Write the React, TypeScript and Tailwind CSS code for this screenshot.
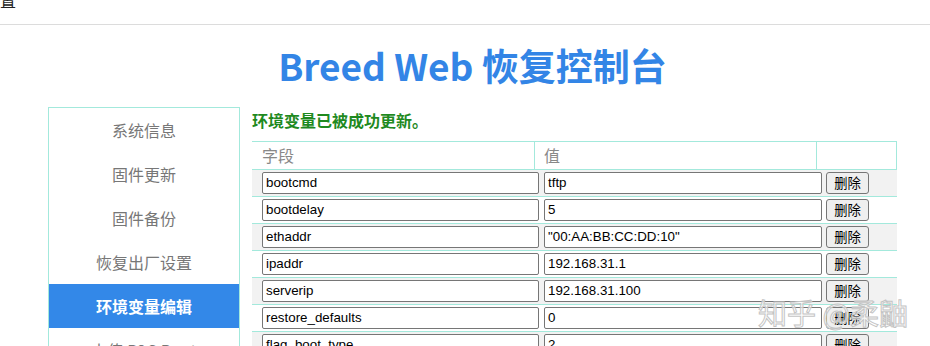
import React from "react";

const rows: [string, string][] = [
  ["bootcmd", "tftp"],
  ["bootdelay", "5"],
  ["ethaddr", '"00:AA:BB:CC:DD:10"'],
  ["ipaddr", "192.168.31.1"],
  ["serverip", "192.168.31.100"],
  ["restore_defaults", "0"],
  ["flag_boot_type", "2"],
];

const nav = ["系统信息", "固件更新", "固件备份", "恢复出厂设置", "环境变量编辑", "上传 P2G Boot"];

export default function App() {
  return (
    <div className="relative w-[930px] h-[346px] overflow-hidden bg-white" style={{ fontFamily: '"Noto Sans CJK SC", sans-serif' }}>
      <div className="h-[25px] border-b border-[#dcdcdc] overflow-hidden">
        <div className="-mt-[10px] text-[16px] leading-[20px] text-[#222] pl-0">置</div>
      </div>
      <div className="pl-[48px] w-[897px]">
        <h1 className="mt-[15px] h-[67px] text-center text-[37px] font-bold leading-[50px] text-[#3385e6] whitespace-nowrap">Breed Web 恢复控制台</h1>
        <div className="flex">
          <div className="w-[192px] shrink-0 border border-[#a3e9dc] text-[16px]">
            {nav.map((n, i) => (
              <div
                key={n}
                className={
                  "h-[44px] flex items-center justify-center whitespace-nowrap " +
                  (i === 4 ? "bg-[#3388e8] text-white font-bold" : "text-[#777]")
                }
              >
                {n}
              </div>
            ))}
          </div>
          <div className="ml-[12px] flex-1">
            <div className="mt-[1px] h-[33px] text-[16px] font-bold text-[#1f8a1f] leading-[24px]">环境变量已被成功更新。</div>
            <div className="flex h-[29px] border-t border-b border-[#a3e9dc] text-[16px] text-[#888]">
              <div className="w-[282px] pl-[10px] leading-[27px]">字段</div>
              <div className="w-[282px] border-l border-[#a3e9dc] pl-[9px] leading-[27px]">值</div>
              <div className="flex-1 border-l border-r border-[#a3e9dc]"></div>
            </div>
            {rows.map(([k, v], i) => (
              <div
                key={k}
                className={
                  "flex items-center h-[27px] border-b border-[#a3e9dc] pl-[10px] gap-[4px] " +
                  (i % 2 === 0 ? "bg-[#f2f2f2]" : "bg-white")
                }
                style={{ fontFamily: '"Liberation Sans", Arial, sans-serif' }}
              >
                <div className="w-[277px] h-[22px] bg-white border border-[#767676] rounded-[2px] px-[3px] text-[13.33px] leading-[20px] text-black whitespace-nowrap">{k}</div>
                <div className="ml-[1px] w-[278px] h-[22px] bg-white border border-[#767676] rounded-[2px] px-[3px] text-[13.33px] leading-[20px] text-black whitespace-nowrap">{v}</div>
                <div
                  className="w-[43px] h-[22px] bg-[#efefef] border border-[#767676] rounded-[3px] text-[13.33px] leading-[20px] text-black text-center"
                  style={{ fontFamily: '"Noto Sans CJK SC", sans-serif' }}
                >
                  删除
                </div>
              </div>
            ))}
          </div>
        </div>
      </div>
      <div
        className="absolute left-[758px] top-[292px] text-[29px] leading-[40px] whitespace-nowrap"
        style={{ WebkitTextStroke: "1px #c4c4c4", color: "rgba(255,255,255,0.65)" }}
      >
        知乎 @柔鼬
      </div>
    </div>
  );
}
